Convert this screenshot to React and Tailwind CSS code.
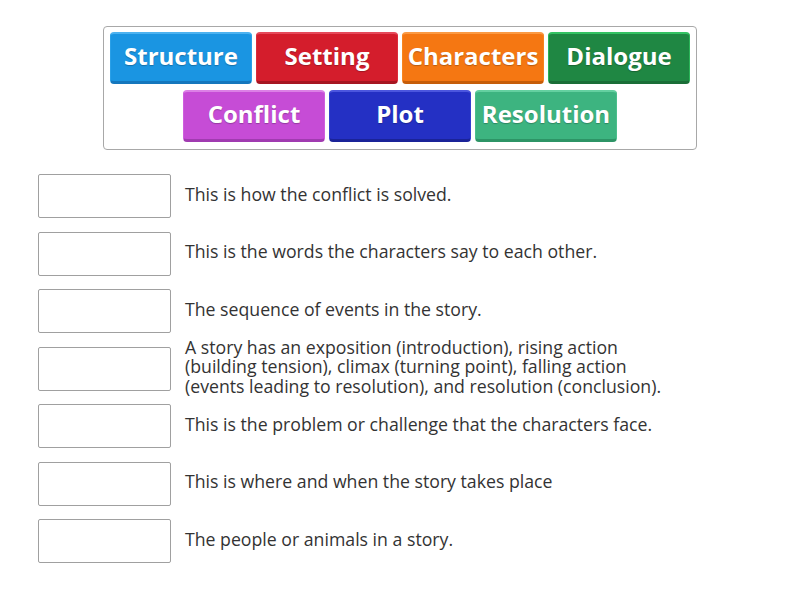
import React from "react";

const btns1 = [
  { t: "Structure", c: "bg-[#1a95e2] border-t-[#4cb2f0] border-x-[#2aa0e8] border-b-[#1577bd]" },
  { t: "Setting", c: "bg-[#d41d2c] border-t-[#e6495a] border-x-[#dc2b3a] border-b-[#a61521]" },
  { t: "Characters", c: "bg-[#f57712] border-t-[#fb9a44] border-x-[#f7851f] border-b-[#c65d09]" },
  { t: "Dialogue", c: "bg-[#1f8743] border-t-[#33c263] border-x-[#2bb458] border-b-[#1a6e37]" },
];
const btns2 = [
  { t: "Conflict", c: "bg-[#c64cd6] border-t-[#dc80e6] border-x-[#cf5fdd] border-b-[#a03bb0]" },
  { t: "Plot", c: "bg-[#2430c4] border-t-[#4b56de] border-x-[#3440d0] border-b-[#1a2398]" },
  { t: "Resolution", c: "bg-[#3db480] border-t-[#64d0a0] border-x-[#4bbf8c] border-b-[#2d9466]" },
];

const rows = [
  ["This is how the conflict is solved."],
  ["This is the words the characters say to each other."],
  ["The sequence of events in the story."],
  [
    "A story has an exposition (introduction), rising action",
    "(building tension), climax (turning point), falling action",
    "(events leading to resolution), and resolution (conclusion).",
  ],
  ["This is the problem or challenge that the characters face."],
  ["This is where and when the story takes place"],
  ["The people or animals in a story."],
];

function Btn({ t, c }) {
  return (
    <div
      className={`w-[142px] h-[52px] rounded-[4px] border-t-2 border-x border-b-[3px] flex items-center justify-center pb-[4px] text-white font-bold text-[24px] leading-none [text-shadow:0_1px_1px_rgba(0,0,0,0.25)] ${c}`}
    >
      {t}
    </div>
  );
}

export default function App() {
  return (
    <div
      className="w-[800px] h-[600px] bg-white"
      style={{ fontFamily: '"Open Sans", sans-serif' }}
    >
      <div className="pt-[26px] flex justify-center">
        <div className="w-[594px] h-[124px] border border-[#a8a8a8] rounded-[4px] px-[6px] pt-[5px] flex flex-col items-center gap-[6px]">
          <div className="flex gap-[4px]">
            {btns1.map((b) => (
              <Btn key={b.t} {...b} />
            ))}
          </div>
          <div className="flex gap-[4px]">
            {btns2.map((b) => (
              <Btn key={b.t} {...b} />
            ))}
          </div>
        </div>
      </div>
      <div className="mt-[24px] ml-[38px] flex flex-col gap-[13.5px]">
        {rows.map((r, i) => (
          <div key={i} className="flex items-center h-[44px]">
            <div className="w-[133px] h-[44px] border border-[#a0a0a0] rounded-[2px] bg-white shrink-0" />
            <div className="ml-[14px] pb-[3px] text-[17.7px] leading-[19.5px] text-[#333333]">
              {r.map((l, j) => (
                <div key={j} className="whitespace-nowrap">{l}</div>
              ))}
            </div>
          </div>
        ))}
      </div>
    </div>
  );
}
